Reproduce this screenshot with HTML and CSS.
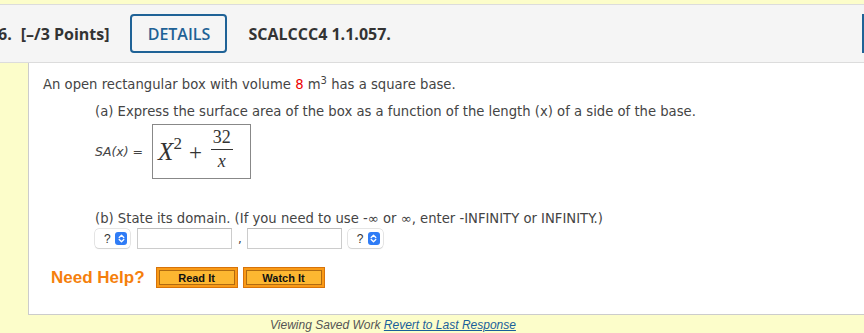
FILE: index.html
```html
<!DOCTYPE html>
<html lang="en">
<head>
    <meta charset="UTF-8">
    <meta name="viewport" content="width=device-width, initial-scale=1.0">
    <title>SCALCCC4 1.1.057.</title>
    <link rel="stylesheet" href="styles.css">
</head>
<body>

    <div class="question-header">
        <span class="q-number">6.</span>
        <span class="q-points">[&ndash;/3 Points]</span>
        <button class="details-btn">DETAILS</button>
        <span class="q-ref">SCALCCC4 1.1.057.</span>
        <span class="header-tools"></span>
    </div>

    <div class="question-wrap">
        <div class="question-body">
            <p class="intro">An open rectangular box with volume <span class="value">8</span> m<sup>3</sup> has a square base.</p>

            <div class="part">
                <p>(a) Express the surface area of the box as a function of the length (x) of a side of the base.</p>
                <div class="answer-row">
                    <span class="fn-label">SA(x) =</span>
                    <div class="math-box">
                        <span class="math-var">X</span><sup class="math-sup">2</sup>
                        <span class="math-op">+</span>
                        <span class="frac">
                            <span class="num">32</span>
                            <span class="den">x</span>
                        </span>
                    </div>
                </div>
            </div>

            <div class="part part-b">
                <p>(b) State its domain. (If you need to use -&infin; or &infin;, enter -INFINITY or INFINITY.)</p>
                <div class="domain-row">
                    <span class="select-box">?
                        <span class="select-arrows">
                            <svg width="7" height="9" viewBox="0 0 7 9"><path d="M1.2 3.5 L3.5 1.3 L5.8 3.5 M1.2 5.5 L3.5 7.7 L5.8 5.5" fill="none" stroke="#fff" stroke-width="1.3" stroke-linecap="round" stroke-linejoin="round"/></svg>
                        </span>
                    </span>
                    <input type="text" class="domain-input">
                    <span class="comma">,</span>
                    <input type="text" class="domain-input">
                    <span class="select-box">?
                        <span class="select-arrows">
                            <svg width="7" height="9" viewBox="0 0 7 9"><path d="M1.2 3.5 L3.5 1.3 L5.8 3.5 M1.2 5.5 L3.5 7.7 L5.8 5.5" fill="none" stroke="#fff" stroke-width="1.3" stroke-linecap="round" stroke-linejoin="round"/></svg>
                        </span>
                    </span>
                </div>
            </div>

            <div class="help-row">
                <span class="need-help">Need Help?</span>
                <button class="help-btn">Read It</button>
                <button class="help-btn">Watch It</button>
            </div>
        </div>
        <div class="saved-work">
            <em>Viewing Saved Work</em> <a href="#">Revert to Last Response</a>
        </div>
    </div>

</body>
</html>
```

FILE: styles.css
```css
html, body {
    margin: 0;
    padding: 0;
}
body {
    width: 864px;
    height: 333px;
    overflow: hidden;
    background: #fcfdca;
    font-family: "DejaVu Sans", Verdana, sans-serif;
    color: #333;
}
.question-header {
    display: flex;
    align-items: center;
    height: 57px;
    margin-top: 4px;
    background: #f5f5f5;
    border-top: 1px solid #dcdcdc;
    border-bottom: 1px solid #dcdcdc;
    font-family: "Open Sans", sans-serif;
    font-size: 16px;
    font-weight: 700;
    color: #333;
    overflow: hidden;
}
.q-number {
    margin-left: -2px;
    margin-right: 9px;
}
.details-btn {
    margin-left: 21px;
    height: 39px;
    width: 97px;
    padding: 0;
    border: 2px solid #1f6296;
    border-radius: 4px;
    background: transparent;
    color: #1f6296;
    font-family: "Open Sans", sans-serif;
    font-size: 16px;
    font-weight: 600;
}
.q-ref {
    margin-left: 21px;
}
.header-tools {
    margin-left: auto;
    margin-right: -42px;
    width: 40px;
    height: 35px;
    border: 2px solid #1f6296;
}
.question-wrap {
    padding-left: 28px;
}
.question-body {
    box-sizing: border-box;
    background: #fff;
    border-left: 1px solid #ccc;
    border-bottom: 1px solid #ccc;
    height: 252px;
    padding: 11px 0 0 14px;
    font-size: 13.2px;
    color: #444;
}
.question-body p {
    margin: 0;
}
.intro {
    line-height: 22px;
}
.value {
    color: #e00;
}
.intro sup {
    font-size: 10px;
    line-height: 0;
}
.part {
    margin-left: 52px;
    margin-top: 5px;
}
.part p {
    line-height: 22px;
}
.answer-row {
    display: flex;
    align-items: center;
    margin-top: 1px;
}
.fn-label {
    font-size: 12.5px;
    font-style: italic;
    margin-right: 9px;
}
.math-box {
    display: flex;
    align-items: center;
    box-sizing: border-box;
    width: 99px;
    height: 55px;
    padding-left: 5px;
    border: 1px solid #888;
    font-family: "Liberation Serif", serif;
    color: #333;
}
.math-var {
    font-style: italic;
    font-size: 25px;
    line-height: 1;
}
.math-sup {
    font-size: 17px;
    align-self: flex-start;
    margin-top: 10px;
    margin-left: 0;
    line-height: 1;
}
.math-op {
    font-size: 23px;
    margin: 2px 9px 0 7px;
}
.frac {
    display: inline-flex;
    flex-direction: column;
    align-items: center;
    font-size: 18px;
    line-height: 19px;
    margin-top: -4px;
}
.frac .num {
    border-bottom: 1px solid #333;
    padding: 0 2px 2px;
}
.frac .den {
    font-style: italic;
    padding-top: 2px;
}
.part-b {
    margin-top: 29px;
}
.domain-row {
    display: flex;
    align-items: center;
    gap: 6px;
    margin-top: -2px;
}
.select-box {
    display: inline-flex;
    align-items: center;
    justify-content: space-between;
    box-sizing: border-box;
    width: 35px;
    height: 19px;
    padding: 0 3px 0 9px;
    background: #fff;
    border-radius: 4px;
    box-shadow: 0 0 0 0.5px #ccc, 0 1px 1px rgba(0, 0, 0, 0.15);
    font-family: "Liberation Sans", Arial, sans-serif;
    font-size: 12px;
    color: #333;
}
.domain-row .domain-input:first-of-type {
    margin-left: 1px;
}
.select-arrows {
    display: inline-flex;
    align-items: center;
    justify-content: center;
    width: 12px;
    height: 13px;
    border-radius: 3px;
    background: #2f7cf6;
}
.domain-input {
    box-sizing: border-box;
    width: 95px;
    height: 21px;
    margin: 0;
    border: 1px solid #ccc;
    border-top-color: #bbb;
    border-radius: 0;
    padding: 0;
}
.comma {
    margin: 0 -1px 0 0;
    font-size: 12px;
}
.help-row {
    display: flex;
    align-items: center;
    margin-top: 18px;
    margin-left: 8px;
}
.need-help {
    font-family: "Liberation Sans", Arial, sans-serif;
    font-size: 17px;
    font-weight: 700;
    color: #f57f0c;
    margin-right: 11px;
}
.help-btn {
    box-sizing: border-box;
    width: 82px;
    height: 21px;
    margin-right: 5px;
    padding: 0;
    border: 1px solid #d7730a;
    background: #fdb731;
    box-shadow: inset 0 0 0 2px #f99a16, inset 0 0 0 3px #b06a10;
    font-family: "Liberation Sans", Arial, sans-serif;
    font-size: 11px;
    font-weight: 700;
    color: #111;
}
.saved-work {
    padding: 3px 0 0 242px;
    font-family: "Liberation Sans", Arial, sans-serif;
    font-size: 12px;
    color: #555;
}
.saved-work a {
    color: #1a5f9a;
    font-style: italic;
}
```
